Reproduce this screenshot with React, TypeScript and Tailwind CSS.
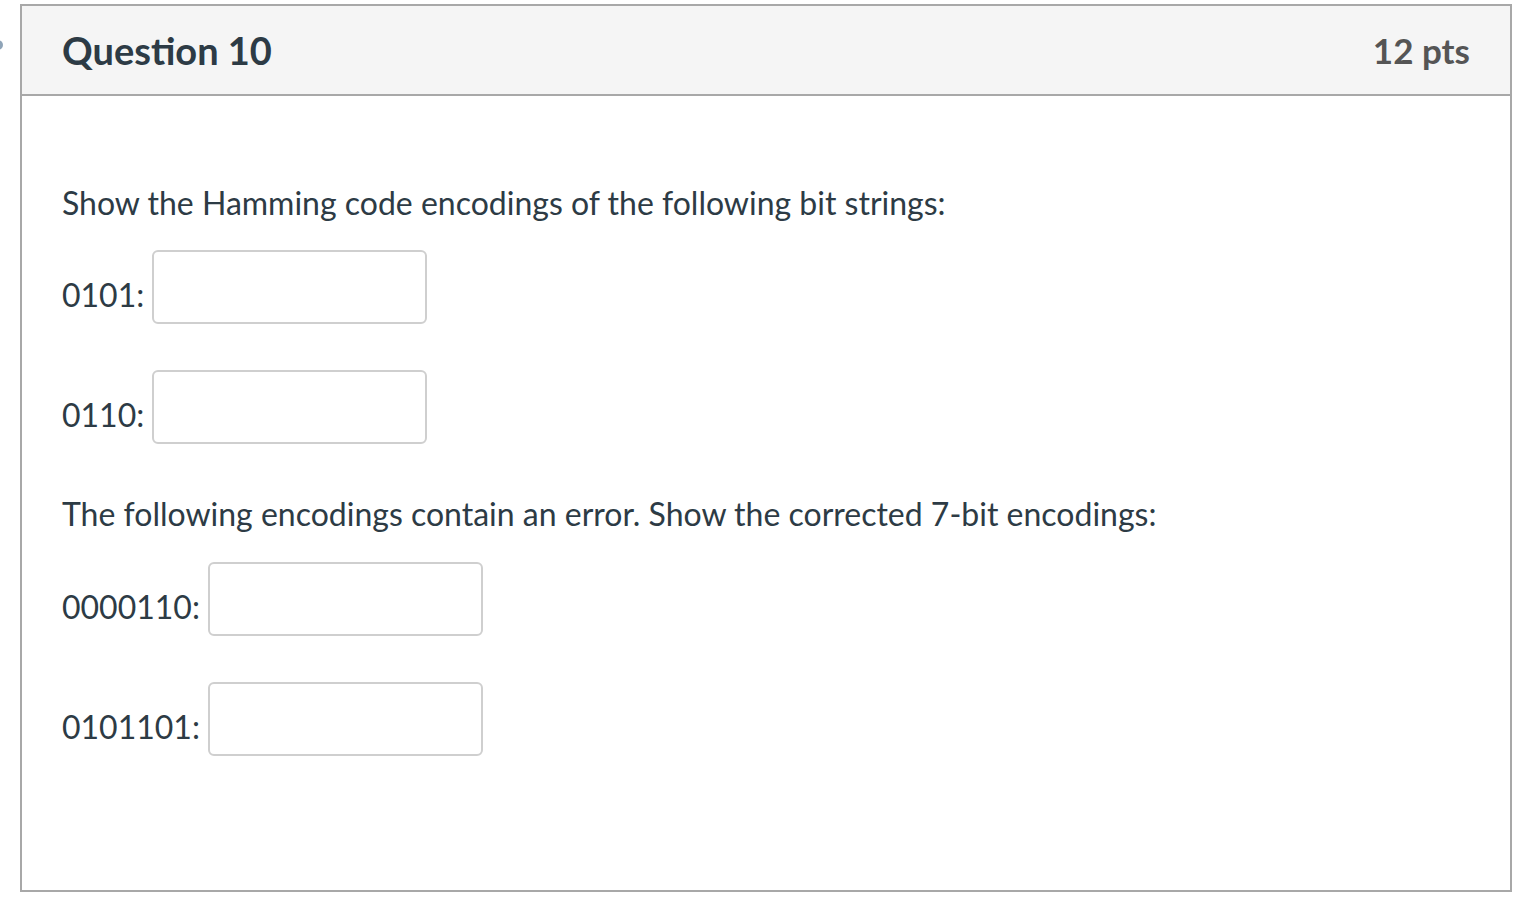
import React from "react";

const font = { fontFamily: "Lato, 'Open Sans', sans-serif" };

const AnswerRow = ({ label }: { label: string }) => (
  <div className="flex items-center gap-[8px]">
    <span className="pt-[14px] leading-[45px]">{label}</span>
    <input
      type="text"
      className="w-[275px] h-[74px] rounded-[6px] border-2 border-[#cfcfcf] bg-white outline-none"
    />
  </div>
);

export default function App() {
  return (
    <div
      className="min-h-screen bg-white flex items-start text-[#2d3b45]"
      style={font}
    >
      <div className="w-[10px] h-[10px] -ml-[7px] mt-[40px] rounded-full bg-[#8fa4b8]" />
      <div className="ml-[17px] mt-[4px] w-[1492px] h-[888px] border-2 border-[#a8a8a8] flex flex-col">
        <header className="h-[90px] shrink-0 bg-[#f5f5f5] border-b-2 border-[#a8a8a8] flex items-center justify-between px-[40px]">
          <h2 className="text-[38px] font-bold leading-none">Question 10</h2>
          <span className="text-[35px] font-bold text-[#555555] leading-none">12 pts</span>
        </header>
        <main className="flex flex-col px-[40px] pt-[84px] text-[32px] leading-[45px]">
          <p>Show the Hamming code encodings of the following bit strings:</p>
          <div className="mt-[25px] flex flex-col gap-[46px]">
            <AnswerRow label="0101:" />
            <AnswerRow label="0110:" />
          </div>
          <p className="mt-[47px]">
            The following encodings contain an error. Show the corrected 7-bit encodings:
          </p>
          <div className="mt-[26px] flex flex-col gap-[46px]">
            <AnswerRow label="0000110:" />
            <AnswerRow label="0101101:" />
          </div>
        </main>
      </div>
    </div>
  );
}
